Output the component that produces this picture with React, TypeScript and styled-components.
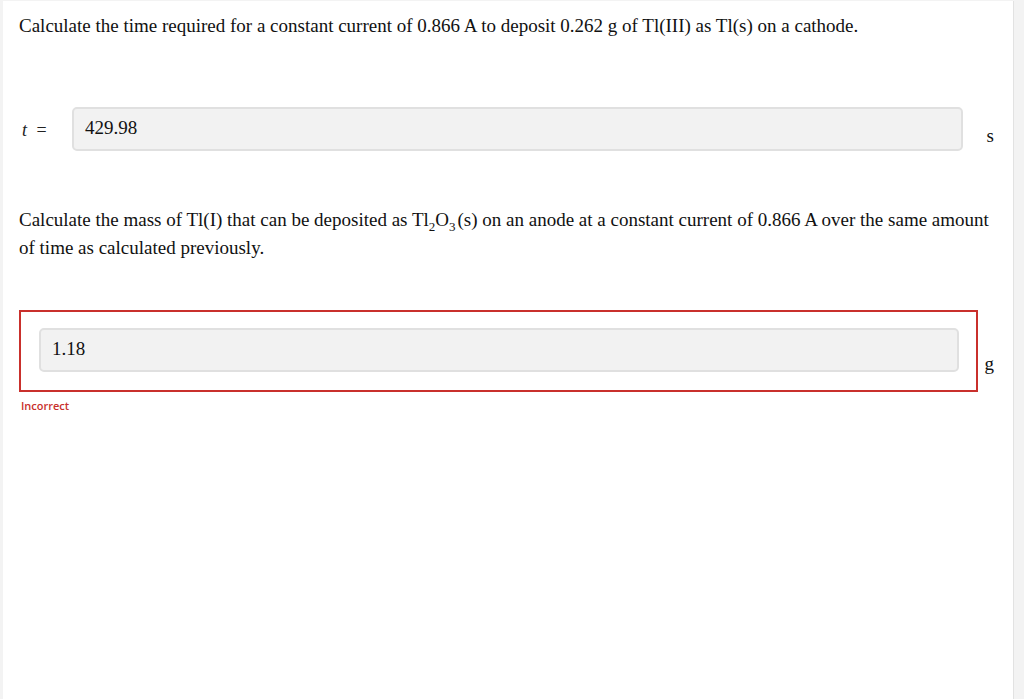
import React from 'react'
import styled, { createGlobalStyle } from 'styled-components';

const GlobalStyle = createGlobalStyle`
  html, body {
    margin: 0;
    padding: 0;
    background: #f3f3f3;
  }
  body {
    font-family: "Liberation Serif", "Times New Roman", serif;
    color: #111;
  }
`;

const Page = styled.div`
  height: 699px;
  padding: 1px 10px 0 3px;
  box-sizing: border-box;
  overflow: hidden;
`;

const Card = styled.div`
  background: #fff;
  height: 100%;
  border-right: 1px solid #e2e2e2;
  padding: 11px 19px 0 16px;
  box-sizing: border-box;
`;

const Prompt = styled.p<{ $top?: number }>`
  margin: ${p => p.$top ?? 0}px 0 0 0;
  font-size: 19px;
  line-height: 28px;
`;

const Sub = styled.span<{ $after?: number }>`
  font-size: 13px;
  line-height: 0;
  position: relative;
  top: 5px;
  margin-right: ${p => p.$after ?? 0}px;
`;

const AnswerRow = styled.div<{ $top: number }>`
  display: flex;
  align-items: flex-end;
  margin-top: ${p => p.$top}px;
`;

const Label = styled.span`
  flex: none;
  width: 53px;
  box-sizing: border-box;
  font-size: 18px;
  padding-left: 3px;
  padding-top: 3px;
  align-self: center;
  word-spacing: 5px;
  color: #222;
  i { font-style: italic; }
`;

const Field = styled.div`
  flex: 1;
  height: 44px;
  box-sizing: border-box;
  background: #f2f2f2;
  border: 2px solid #e0e0e0;
  border-radius: 5px;
  padding: 9px 11px;
  font-size: 19px;
  line-height: 20px;
`;

const Unit = styled.span<{ $gap: number; $lift: number }>`
  flex: none;
  width: ${p => p.$gap}px;
  text-align: right;
  font-size: 19px;
  line-height: 20px;
  padding-bottom: ${p => p.$lift}px;
`;

const WrongBox = styled.div`
  flex: 1;
  border: 2px solid #c9302c;
  padding: 16px 17px 18px 18px;
  display: flex;
`;

const Feedback = styled.div`
  margin-top: 6px;
  padding-left: 2px;
  font-family: "Open Sans", "Liberation Sans", sans-serif;
  font-weight: 600;
  font-size: 11px;
  color: #c9302c;
`;

const App: React.FC = () => {
  return (
    <>
      <GlobalStyle />
      <Page>
        <Card>
          <Prompt>
            Calculate the time required for a constant current of 0.866 A to deposit 0.262 g of Tl(III) as Tl(s) on a cathode.
          </Prompt>

          <AnswerRow $top={67}>
            <Label><i>t</i> =</Label>
            <Field>429.98</Field>
            <Unit $gap={31} $lift={5}>s</Unit>
          </AnswerRow>

          <Prompt $top={55}>
            Calculate the mass of Tl(I) that can be deposited as Tl<Sub>2</Sub>O<Sub $after={2}>3</Sub>(s) on an anode at a constant current of 0.866 A over the same amount of time as calculated previously.
          </Prompt>

          <AnswerRow $top={48}>
            <WrongBox>
              <Field>1.18</Field>
            </WrongBox>
            <Unit $gap={16} $lift={18}>g</Unit>
          </AnswerRow>
          <Feedback>Incorrect</Feedback>
        </Card>
      </Page>
    </>
  )
}

export default App
